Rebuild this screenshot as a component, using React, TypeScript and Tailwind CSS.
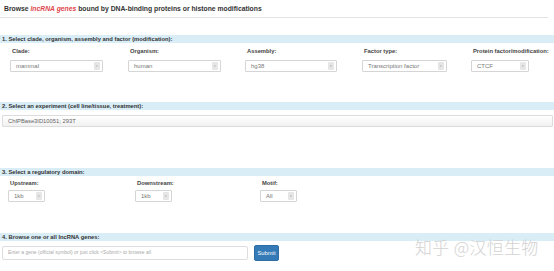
import { ReactNode } from "react";

export default function App() {
  return (
    <div className="relative h-[271px] w-[554px] overflow-hidden bg-white font-['Liberation_Sans',Arial,sans-serif] text-[#333]">
      <h1 className="px-[4px] pt-[5px] text-[6.8px] font-bold leading-[8px]">
        Browse <span className="italic text-[#e0474c]">lncRNA genes</span> bound by DNA-binding proteins or histone modifications
      </h1>
      <div className="mt-[4px] mr-[6px] border-t border-[#e3e3e3]" />

      <Band className="mt-[17px]">1. Select clade, organism, assembly and factor (modification):</Band>
      <div className="mt-[5px] flex">
        <Field label="Clade:" className="ml-[10px] w-[93px]" value="mammal" gap="mt-[5px]" />
        <Field label="Organism:" className="ml-[25px] w-[93px]" value="human" gap="mt-[5px]" />
        <Field label="Assembly:" className="ml-[24px] w-[92px]" value="hg38" gap="mt-[5px]" />
        <Field label="Factor type:" className="ml-[25px] w-[85px]" value="Transcription factor" gap="mt-[5px]" />
        <Field label="Protein factor/modification:" className="ml-[24px] w-[58px]" value="CTCF" gap="mt-[5px]" />
      </div>

      <Band className="mt-[30px]">2. Select an experiment (cell line/tissue, treatment):</Band>
      <div className="mt-[5px] ml-[2px] mr-[1px] flex h-[12px] items-center rounded-[1px] border border-[#dcdcdc] bg-gradient-to-b from-white to-[#f1f1f1] px-[5px] text-[5.8px] text-[#666]">
        ChIPBase3ID10051; 293T
      </div>

      <Band className="mt-[41px]">3. Select a regulatory domain:</Band>
      <div className="mt-[4px] flex">
        <Field label="Upstream:" className="ml-[8px] w-[37px]" value="1kb" gap="mt-[3px]" />
        <Field label="Downstream:" className="ml-[90px] w-[37px]" value="1kb" gap="mt-[3px]" />
        <Field label="Motif:" className="ml-[88px] w-[37px]" value="All" gap="mt-[3px]" />
      </div>

      <Band className="mt-[31px]">4. Browse one or all lncRNA genes:</Band>
      <div className="mt-[4px] flex items-center">
        <div className="ml-[2px] flex h-[14px] w-[246px] items-center rounded-[2px] border border-[#ddd] bg-white px-[5px] text-[5px] text-[#aaa]">
          Enter a gene (official symbol) or just click &lt;Submit&gt; to browse all
        </div>
        <button className="ml-[6px] h-[16px] w-[25px] rounded-[2px] border border-[#2e6da4] bg-[#337ab7] text-[5.8px] text-white">
          Submit
        </button>
      </div>

      <div className="absolute left-[415px] top-[236px] font-['Noto_Sans_CJK_SC',sans-serif] text-[17px] font-light leading-[22px] tracking-[0.3px] text-[#d2d2d2]">
        知乎 @汉恒生物
      </div>
    </div>
  );
}

function Band({ children, className }: { children: ReactNode; className?: string }) {
  return (
    <div className={`flex h-[8px] items-center bg-[#d9edf7] pl-[2px] text-[5.8px] font-bold text-[#333] ${className}`}>
      {children}
    </div>
  );
}

function Field({ label, value, className, gap }: { label: string; value: string; className?: string; gap: string }) {
  return (
    <div className={className}>
      <p className="whitespace-nowrap pl-[2px] text-[5.8px] font-bold leading-[7px] text-[#444]">{label}</p>
      <div className={`${gap} flex h-[12px] items-center rounded-[1px] border border-[#d5d5d5] bg-white`}>
        <span className="flex-1 truncate pl-[5px] text-[6px] text-[#777]">{value}</span>
        <span className="mr-[2px] flex h-[8px] w-[6px] items-center justify-center rounded-[1px] bg-[#e6e6e6] text-[3px] text-[#999]">
          ▾
        </span>
      </div>
    </div>
  );
}
